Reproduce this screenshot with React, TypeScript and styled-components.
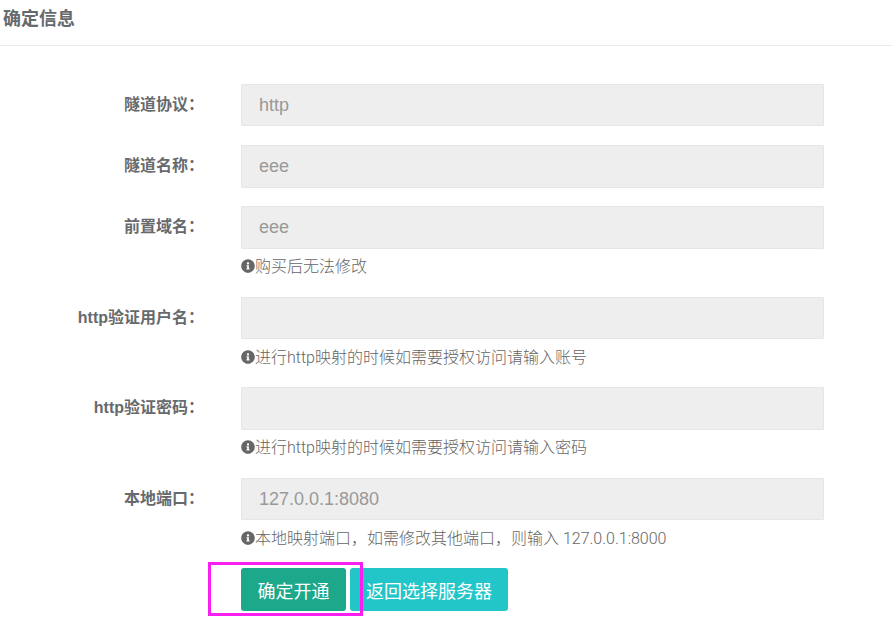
import React from "react";
import styled, { createGlobalStyle } from "styled-components";
import { FaInfoCircle } from "react-icons/fa";

const GlobalStyle = createGlobalStyle`
    body {
        margin: 0;
        background: #fff;
        color: #676a6c;
        font-family: "Liberation Sans", "Noto Sans CJK SC", sans-serif;
    }
`

const Page = styled.div`
    width: 892px;
    height: 633px;
    overflow: hidden;
`

const TitleBar = styled.div`
    height: 37px;
    padding: 8px 0 0 3px;
    border-bottom: 1px solid #e7eaec;
    font-size: 18px;
    line-height: 22px;
    font-weight: bold;
`

const Form = styled.div`
    display: flex;
    flex-direction: column;
    padding-top: 38px;
`

const Row = styled.div<{ $gap: number }>`
    display: flex;
    margin-bottom: ${(p) => p.$gap}px;
`

const Label = styled.div`
    width: 204px;
    height: 42px;
    line-height: 42px;
    text-align: right;
    font-size: 16px;
    font-weight: bold;
    white-space: nowrap;
    flex-shrink: 0;
`

const Field = styled.div`
    margin-left: 37px;
    width: 583px;
`

const Input = styled.input<{ $height: number }>`
    display: block;
    width: 100%;
    height: ${(p) => p.$height}px;
    box-sizing: border-box;
    padding: 0 17px;
    background: #eee;
    border: 1px solid #e5e6e7;
    border-radius: 1px;
    font-family: inherit;
    font-size: 18px;
    color: #999;
    opacity: 1;
    -webkit-text-fill-color: #999;
`

const Help = styled.div<{ $top: number }>`
    display: flex;
    align-items: center;
    height: 22px;
    margin-top: ${(p) => p.$top}px;
    font-family: Roboto, "Noto Sans CJK SC", sans-serif;
    font-size: 16px;
    line-height: 22px;
    font-weight: 300;
    color: #666;
    white-space: nowrap;

    svg {
        width: 14px;
        height: 14px;
        color: #666;
        position: relative;
        top: -1px;
    }
`

const Actions = styled.div`
    position: relative;
    display: flex;
    gap: 4px;
    margin-left: 241px;
`

const Button = styled.button<{ $bg: string; $width: number }>`
    width: ${(p) => p.$width}px;
    height: 43px;
    padding: 0;
    border: none;
    border-radius: 3px;
    background: ${(p) => p.$bg};
    color: #fff;
    font-family: inherit;
    font-size: 18px;
    white-space: nowrap;
`

const Highlight = styled.div`
    position: absolute;
    left: -33px;
    top: -6px;
    width: 155px;
    height: 54px;
    box-sizing: border-box;
    border: 3px solid #f81ff0;
    pointer-events: none;
`

type FieldRow = {
    label: string;
    value: string;
    height: number;
    helpTop?: number;
    help?: string;
    gap: number;
};

const rows: FieldRow[] = [
    { label: "隧道协议：", value: "http", height: 42, gap: 19 },
    { label: "隧道名称：", value: "eee", height: 43, gap: 18 },
    { label: "前置域名：", value: "eee", height: 43, helpTop: 7, help: "购买后无法修改", gap: 19 },
    { label: "http验证用户名：", value: "", height: 42, helpTop: 8, help: "进行http映射的时候如需要授权访问请输入账号", gap: 18 },
    { label: "http验证密码：", value: "", height: 43, helpTop: 7, help: "进行http映射的时候如需要授权访问请输入密码", gap: 19 },
    { label: "本地端口：", value: "127.0.0.1:8080", height: 42, helpTop: 8, help: "本地映射端口，如需修改其他端口，则输入 127.0.0.1:8000", gap: 18 },
];

const App = () => {
    return (
        <Page>
            <GlobalStyle />
            <TitleBar>确定信息</TitleBar>
            <Form>
                {rows.map((row) => (
                    <Row key={row.label} $gap={row.gap}>
                        <Label>{row.label}</Label>
                        <Field>
                            <Input $height={row.height} value={row.value} disabled readOnly />
                            {row.help && (
                                <Help $top={row.helpTop ?? 7}>
                                    <FaInfoCircle />
                                    {row.help}
                                </Help>
                            )}
                        </Field>
                    </Row>
                ))}
                <Actions>
                    <Button $bg="#1ca88b" $width={105}>确定开通</Button>
                    <Button $bg="#23c6c8" $width={158}>返回选择服务器</Button>
                    <Highlight />
                </Actions>
            </Form>
        </Page>
    );
};

export default App;
